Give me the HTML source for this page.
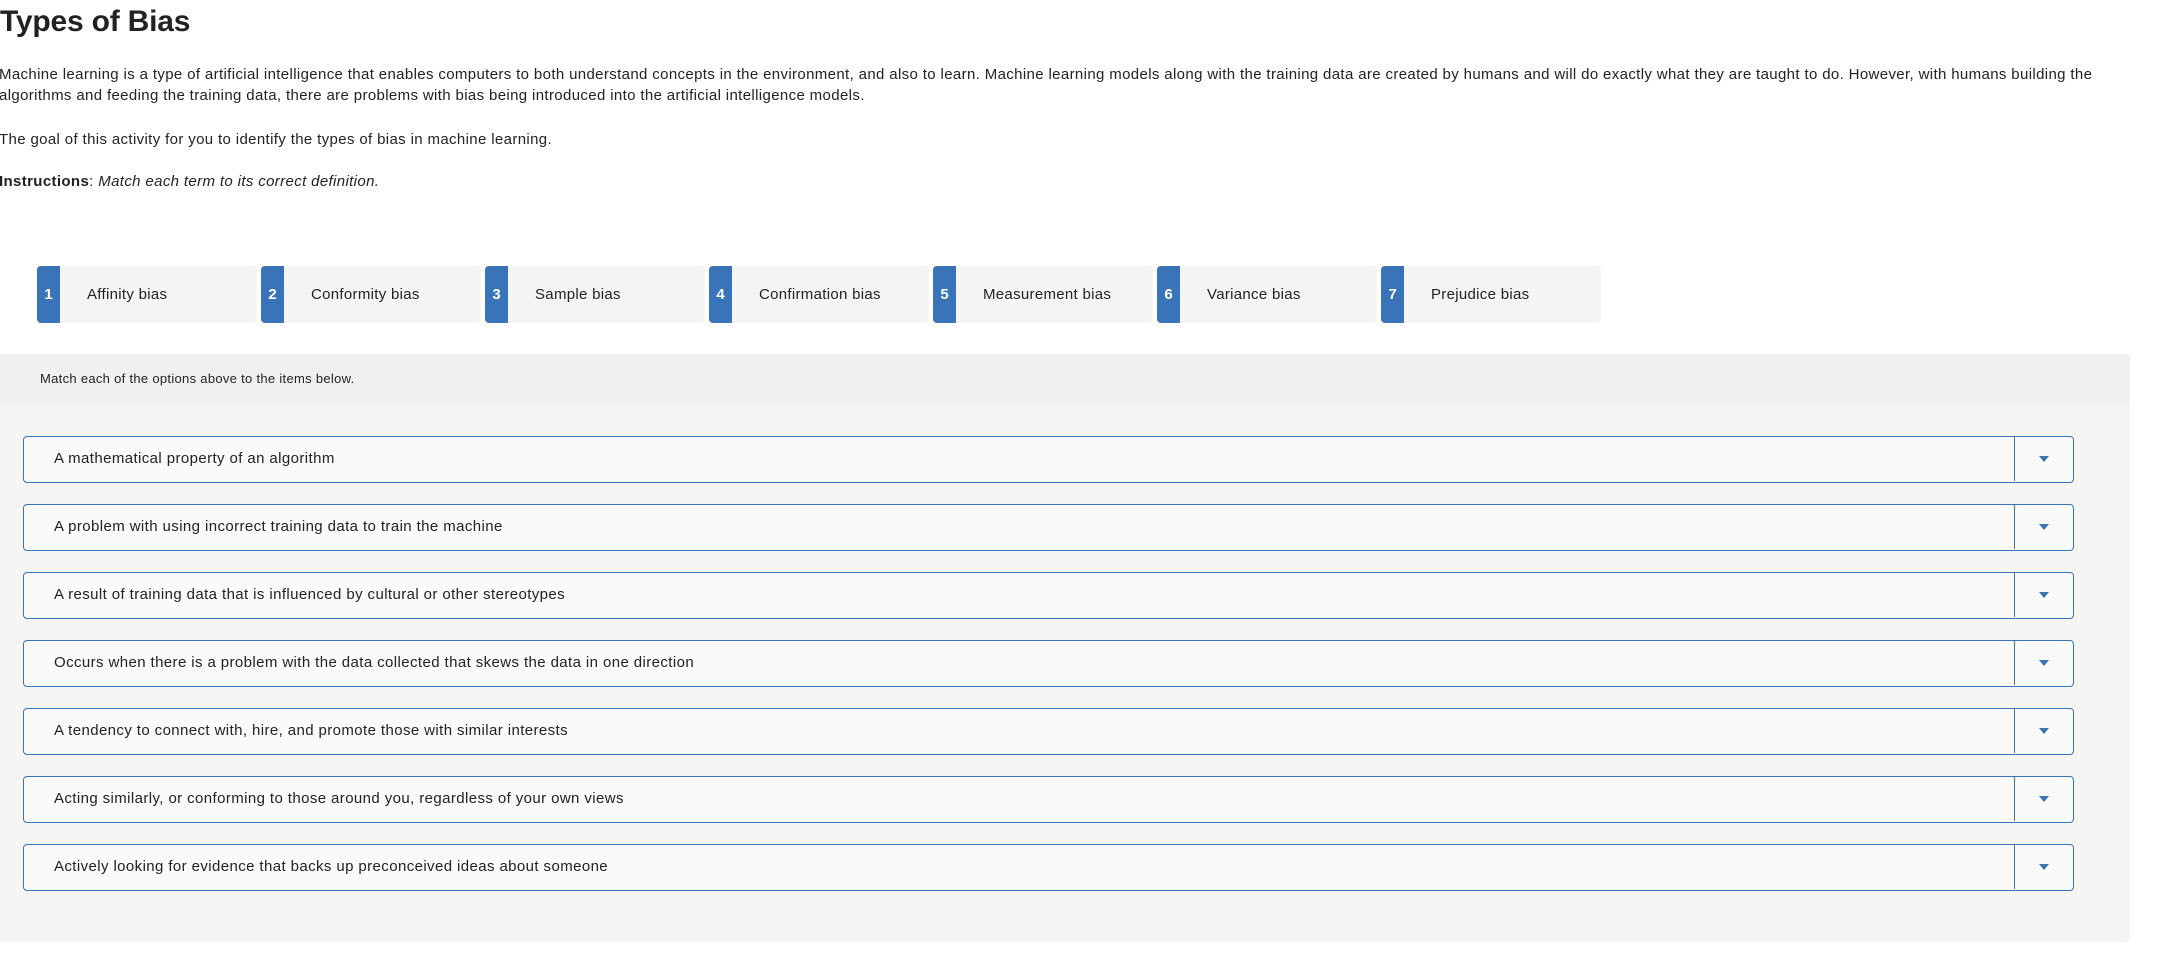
<!DOCTYPE html>
<html><head><meta charset="utf-8"><style>
*{margin:0;padding:0;box-sizing:border-box}
body{width:2165px;height:980px;background:#fff;font-family:"Liberation Sans",sans-serif;color:#222;position:relative;overflow:hidden}
.a{position:absolute;white-space:nowrap}
h1{position:absolute;left:0;top:5px;font-size:30px;font-weight:bold;color:#222;letter-spacing:-0.2px}
.p{font-size:15px;letter-spacing:0.36px}
.blk{position:absolute;top:266px;width:220px;height:57px;background:#f4f4f4;border-radius:4px;overflow:hidden}
.blk .n{position:absolute;left:0;top:0;width:23px;height:57px;background:#3a74b8;color:#fff;font-weight:bold;font-size:15px;text-align:center;line-height:57px}
.blk .t{position:absolute;left:50px;top:0;line-height:57px;font-size:15px;letter-spacing:0.3px;white-space:nowrap}
.panel{position:absolute;left:0;top:354px;width:2130px;height:588px;background:#f5f5f5;border-radius:0 4px 4px 0}
.hdr{position:absolute;left:0;top:0;width:2130px;height:50px;background:#f0f0f0;border-radius:0 4px 0 0}
.hdr span{position:absolute;left:40px;top:17px;font-size:13px;letter-spacing:0.3px}
.dd{position:absolute;left:23px;width:2051px;height:47px;background:#fafafa;border:1.5px solid #3a74b8;border-radius:4px}
.dd .t{position:absolute;left:30px;top:0;line-height:44px;font-size:15px;letter-spacing:0.4px;white-space:nowrap}
.dd .d{position:absolute;left:1990px;top:0;width:0;height:44px;border-left:1.5px solid #3a74b8}
.dd .ar{position:absolute;left:2015px;top:19px;width:0;height:0;border-left:5px solid transparent;border-right:5px solid transparent;border-top:6px solid #3a74b8}
</style></head><body>
<h1>Types of Bias</h1>
<div class="a p" style="left:-1px;top:66px">Machine learning is a type of artificial intelligence that enables computers to both understand concepts in the environment, and also to learn. Machine learning models along with the training data are created by humans and will do exactly what they are taught to do. However, with humans building the</div>
<div class="a p" style="left:-1px;top:87px">algorithms and feeding the training data, there are problems with bias being introduced into the artificial intelligence models.</div>
<div class="a p" style="left:-1px;top:131px">The goal of this activity for you to identify the types of bias in machine learning.</div>
<div class="a p" style="left:-1px;top:173px"><b>Instructions</b>: <i>Match each term to its correct definition.</i></div>

<div class="blk" style="left:37px"><div class="n">1</div><div class="t">Affinity bias</div></div>
<div class="blk" style="left:261px"><div class="n">2</div><div class="t">Conformity bias</div></div>
<div class="blk" style="left:485px"><div class="n">3</div><div class="t">Sample bias</div></div>
<div class="blk" style="left:709px"><div class="n">4</div><div class="t">Confirmation bias</div></div>
<div class="blk" style="left:933px"><div class="n">5</div><div class="t">Measurement bias</div></div>
<div class="blk" style="left:1157px"><div class="n">6</div><div class="t">Variance bias</div></div>
<div class="blk" style="left:1381px"><div class="n">7</div><div class="t">Prejudice bias</div></div>

<div class="panel"><div class="hdr"><span>Match each of the options above to the items below.</span></div></div>

<div class="dd" style="top:436px"><div class="t">A mathematical property of an algorithm</div><div class="d"></div><div class="ar"></div></div>
<div class="dd" style="top:504px"><div class="t">A problem with using incorrect training data to train the machine</div><div class="d"></div><div class="ar"></div></div>
<div class="dd" style="top:572px"><div class="t">A result of training data that is influenced by cultural or other stereotypes</div><div class="d"></div><div class="ar"></div></div>
<div class="dd" style="top:640px"><div class="t">Occurs when there is a problem with the data collected that skews the data in one direction</div><div class="d"></div><div class="ar"></div></div>
<div class="dd" style="top:708px"><div class="t">A tendency to connect with, hire, and promote those with similar interests</div><div class="d"></div><div class="ar"></div></div>
<div class="dd" style="top:776px"><div class="t">Acting similarly, or conforming to those around you, regardless of your own views</div><div class="d"></div><div class="ar"></div></div>
<div class="dd" style="top:844px"><div class="t">Actively looking for evidence that backs up preconceived ideas about someone</div><div class="d"></div><div class="ar"></div></div>
</body></html>
